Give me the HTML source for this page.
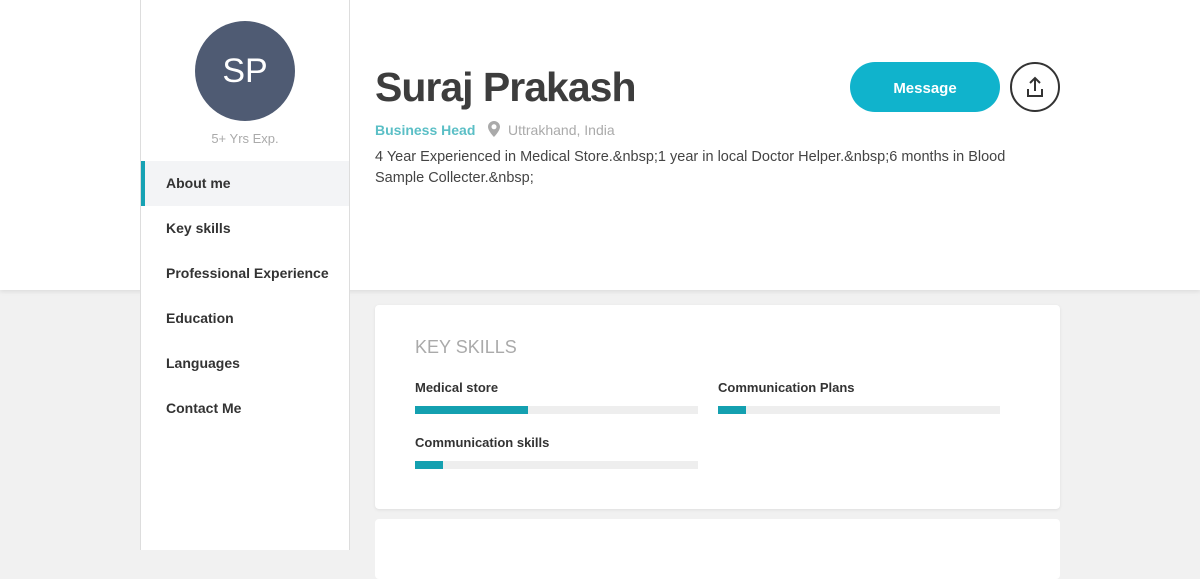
<!DOCTYPE html>
<html><head><style>
*{margin:0;padding:0;box-sizing:border-box}
body{width:1200px;height:550px;overflow:hidden;background:#f1f1f1;font-family:"Liberation Sans",sans-serif;position:relative}
.top{position:absolute;left:0;top:0;width:1200px;height:290px;background:#fff;box-shadow:0 2px 4px rgba(0,0,0,.08)}
.side{position:absolute;left:140px;top:0;width:210px;height:550px;background:#fff;border-left:1px solid #ddd;border-right:1px solid #ddd}
.av{position:absolute;left:54px;top:21px;width:100px;height:100px;border-radius:50%;background:#4f5b73;color:#fff;font-size:34px;text-align:center;line-height:100px}
.exp{position:absolute;left:0;width:208px;top:131px;text-align:center;color:#aaa;font-size:13px}
.nav{position:absolute;top:161px;left:0;width:208px}
.nav div{height:45px;line-height:45px;padding-left:25px;font-size:14px;font-weight:bold;color:#333}
.nav .on{background:#f3f4f6;border-left:4px solid #16a2b4;padding-left:21px}
h1{position:absolute;left:375px;top:64px;font-size:41px;letter-spacing:-1px;color:#3d3d3d;font-weight:bold}
.role{position:absolute;left:375px;top:122px;font-size:14px;color:#5bbfc6;font-weight:bold}
.loc{position:absolute;left:488px;top:121px;font-size:14px;color:#aaa}
.desc{position:absolute;left:375px;top:147px;width:660px;font-size:14.5px;line-height:21px;color:#444}
.msg{position:absolute;left:850px;top:62px;width:150px;height:50px;border-radius:25px;background:#10b3cc;color:#fff;font-weight:bold;font-size:15px;text-align:center;line-height:54px}
.sh{position:absolute;left:1010px;top:62px;width:50px;height:50px;border-radius:50%;border:2px solid #333}
.card{position:absolute;left:375px;top:305px;width:685px;height:204px;background:#fff;border-radius:4px;box-shadow:0 1px 3px rgba(0,0,0,.08)}
.card2{position:absolute;left:375px;top:519px;width:685px;height:60px;background:#fff;border-radius:4px}
.ct{position:absolute;left:40px;top:32px;font-size:18px;color:#aaa}
.sk{position:absolute;font-size:13px;font-weight:bold;color:#333}
.bar{position:absolute;height:8px;width:283px;background:#eee}
.bar i{display:block;height:8px;background:#14a0b0}
</style></head><body>
<div class="top"></div>
<div class="side">
<div class="av">SP</div>
<div class="exp">5+ Yrs Exp.</div>
<div class="nav"><div class="on">About me</div><div>Key skills</div><div>Professional Experience</div><div>Education</div><div>Languages</div><div>Contact Me</div></div>
</div>
<h1>Suraj Prakash</h1>
<div class="role">Business Head</div>
<div class="loc"><svg width="12" height="16" viewBox="0 0 12 16" style="vertical-align:-2px;margin-right:8px"><path d="M6 0C2.7 0 0 2.6 0 5.8 0 10 6 16 6 16s6-6 6-10.2C12 2.6 9.3 0 6 0zm0 8.3a2.5 2.5 0 110-5 2.5 2.5 0 010 5z" fill="#aaa"/></svg>Uttrakhand, India</div>
<div class="desc">4 Year Experienced in Medical Store.&amp;nbsp;1 year in local Doctor Helper.&amp;nbsp;6 months in Blood Sample Collecter.&amp;nbsp;</div>
<div class="msg">Message</div>
<div class="sh"><svg width="46" height="46" viewBox="0 0 46 46"><path d="M23 14v13M18 19l5-5 5 5M16 25v7h14v-7" fill="none" stroke="#333" stroke-width="2"/></svg></div>
<div class="card">
<div class="ct">KEY SKILLS</div>
<div class="sk" style="left:40px;top:75px">Medical store</div>
<div class="bar" style="left:40px;top:101px"><i style="width:113px"></i></div>
<div class="sk" style="left:343px;top:75px">Communication Plans</div>
<div class="bar" style="left:343px;top:101px;width:282px"><i style="width:28px"></i></div>
<div class="sk" style="left:40px;top:130px">Communication skills</div>
<div class="bar" style="left:40px;top:156px"><i style="width:28px"></i></div>
</div>
<div class="card2"></div>
</body></html>
